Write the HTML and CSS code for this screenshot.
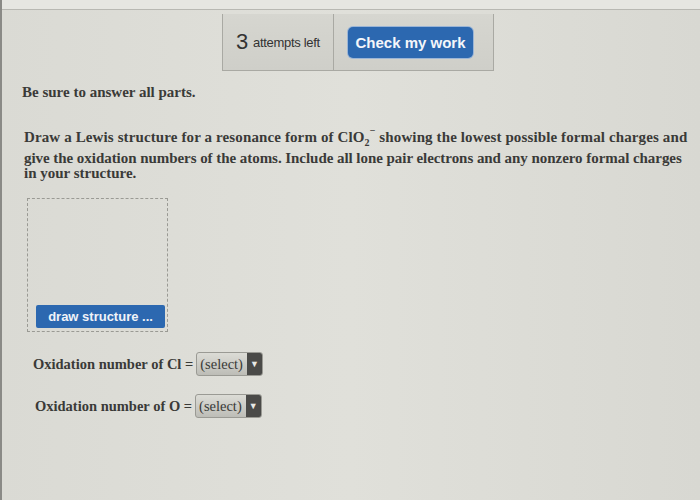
FILE: index.html
```html
<!DOCTYPE html>
<html lang="en">
<head>
    <meta charset="UTF-8">
    <meta name="viewport" content="width=device-width, initial-scale=1.0">
    <title>Lewis Structure</title>
    <link rel="stylesheet" href="styles.css">
</head>
<body>
    <div class="top-strip"></div>
    <div class="page">
        <div class="toolbar">
            <div class="attempts"><span class="count">3</span> attempts left</div>
            <div class="check-cell">
                <button class="check-btn">Check my work</button>
            </div>
        </div>

        <p class="note">Be sure to answer all parts.</p>

        <div class="question">
            <span class="line first">Draw a Lewis structure for a resonance form of ClO<sub>2</sub><sup>&#8722;</sup> showing the lowest possible formal charges and</span>
            <span class="line second">give the oxidation numbers of the atoms. Include all lone pair electrons and any nonzero formal charges</span>
            <span class="line last">in your structure.</span>
        </div>

        <div class="structure-box">
            <button class="draw-btn">draw structure ...</button>
        </div>

        <div class="ox-row">
            <span>Oxidation number of Cl =</span>
            <span class="select">(select)<span class="arrow">&#9660;</span></span>
        </div>
        <div class="ox-row ox-row-o">
            <span>Oxidation number of O =</span>
            <span class="select">(select)<span class="arrow">&#9660;</span></span>
        </div>
    </div>
</body>
</html>
```

FILE: styles.css
```css
body {
    margin: 0;
    height: 500px;
    overflow: hidden;
    background: linear-gradient(90deg, #dadad4 0%, #e0e0da 50%, #d8d8d2 100%);
    font-family: 'Liberation Serif', 'Times New Roman', serif;
    color: #3a3a38;
    border-left: 2px solid #8a8a86;
}

.top-strip {
    height: 9px;
    background: #e6e6e1;
    border-bottom: 1px solid #b8b8b2;
}

.page {
    padding: 0 0 0 20px;
}

.toolbar {
    display: flex;
    margin: 4px 0 0 200px;
    width: 270px;
    height: 56px;
    border: 1px solid #a9a9a3;
    border-top: none;
    background: linear-gradient(180deg, #d6d6d0 0%, #cfcfc9 100%);
}

.attempts {
    width: 110px;
    display: flex;
    align-items: center;
    justify-content: center;
    gap: 5px;
    font-family: 'Liberation Sans', Arial, sans-serif;
    font-size: 13px;
    color: #333;
    border-right: 1px solid #a9a9a3;
    letter-spacing: -0.3px;
}

.count {
    font-size: 22px;
}

.check-cell {
    flex: 1;
    display: flex;
    align-items: center;
    padding-left: 14px;
}

.check-btn {
    background: #2c68b0;
    color: #f4f6fa;
    border: none;
    border-radius: 5px;
    width: 125px;
    height: 31px;
    font-family: 'Liberation Sans', Arial, sans-serif;
    font-weight: bold;
    font-size: 15px;
    padding: 0;
    box-shadow: 0 0 0 1px #9bb5d6;
}

.note {
    margin: 11px 0 0 0;
    font-weight: bold;
    font-size: 15px;
    line-height: 20px;
}

.question {
    margin: 27px 0 0 2px;
    font-weight: bold;
    font-size: 15px;
    white-space: nowrap;
}

.line {
    display: block;
    line-height: 16px;
}

.line.first {
    margin-bottom: 5px;
    letter-spacing: 0.12px;
}

.line.second {
    letter-spacing: -0.05px;
}

.line.last {
    line-height: 14px;
}

.question sub {
    font-size: 10px;
    line-height: 0;
}

.question sup {
    font-size: 10px;
    line-height: 0;
    position: relative;
    top: -2px;
}

.structure-box {
    margin: 18px 0 0 5px;
    width: 141px;
    height: 134px;
    border: 1px dashed #9a9a94;
    display: flex;
    align-items: flex-end;
    padding: 0 0 3px 8px;
    box-sizing: border-box;
}

.draw-btn {
    background: #2c68b0;
    color: #f0f3f8;
    border: none;
    border-radius: 2px;
    width: 129px;
    height: 23px;
    font-family: 'Liberation Sans', Arial, sans-serif;
    font-weight: bold;
    font-size: 13px;
    padding: 0;
}

.ox-row {
    display: flex;
    align-items: center;
    gap: 3px;
    margin: 20px 0 0 11px;
    font-weight: bold;
    font-size: 14.5px;
}

.ox-row-o {
    margin-top: 18px;
    margin-left: 13px;
}

.select {
    display: flex;
    align-items: center;
    height: 22px;
    border: 1px solid #9a9a94;
    border-radius: 3px;
    background: linear-gradient(180deg, #dcdcd6 0%, #bdbdb7 100%);
    font-weight: normal;
    font-size: 14.5px;
    padding-left: 3px;
    overflow: hidden;
}

.arrow {
    margin-left: 4px;
    width: 15px;
    height: 100%;
    background: #4a4a48;
    color: #e8e8e4;
    font-size: 9px;
    display: flex;
    align-items: center;
    justify-content: center;
}
```
